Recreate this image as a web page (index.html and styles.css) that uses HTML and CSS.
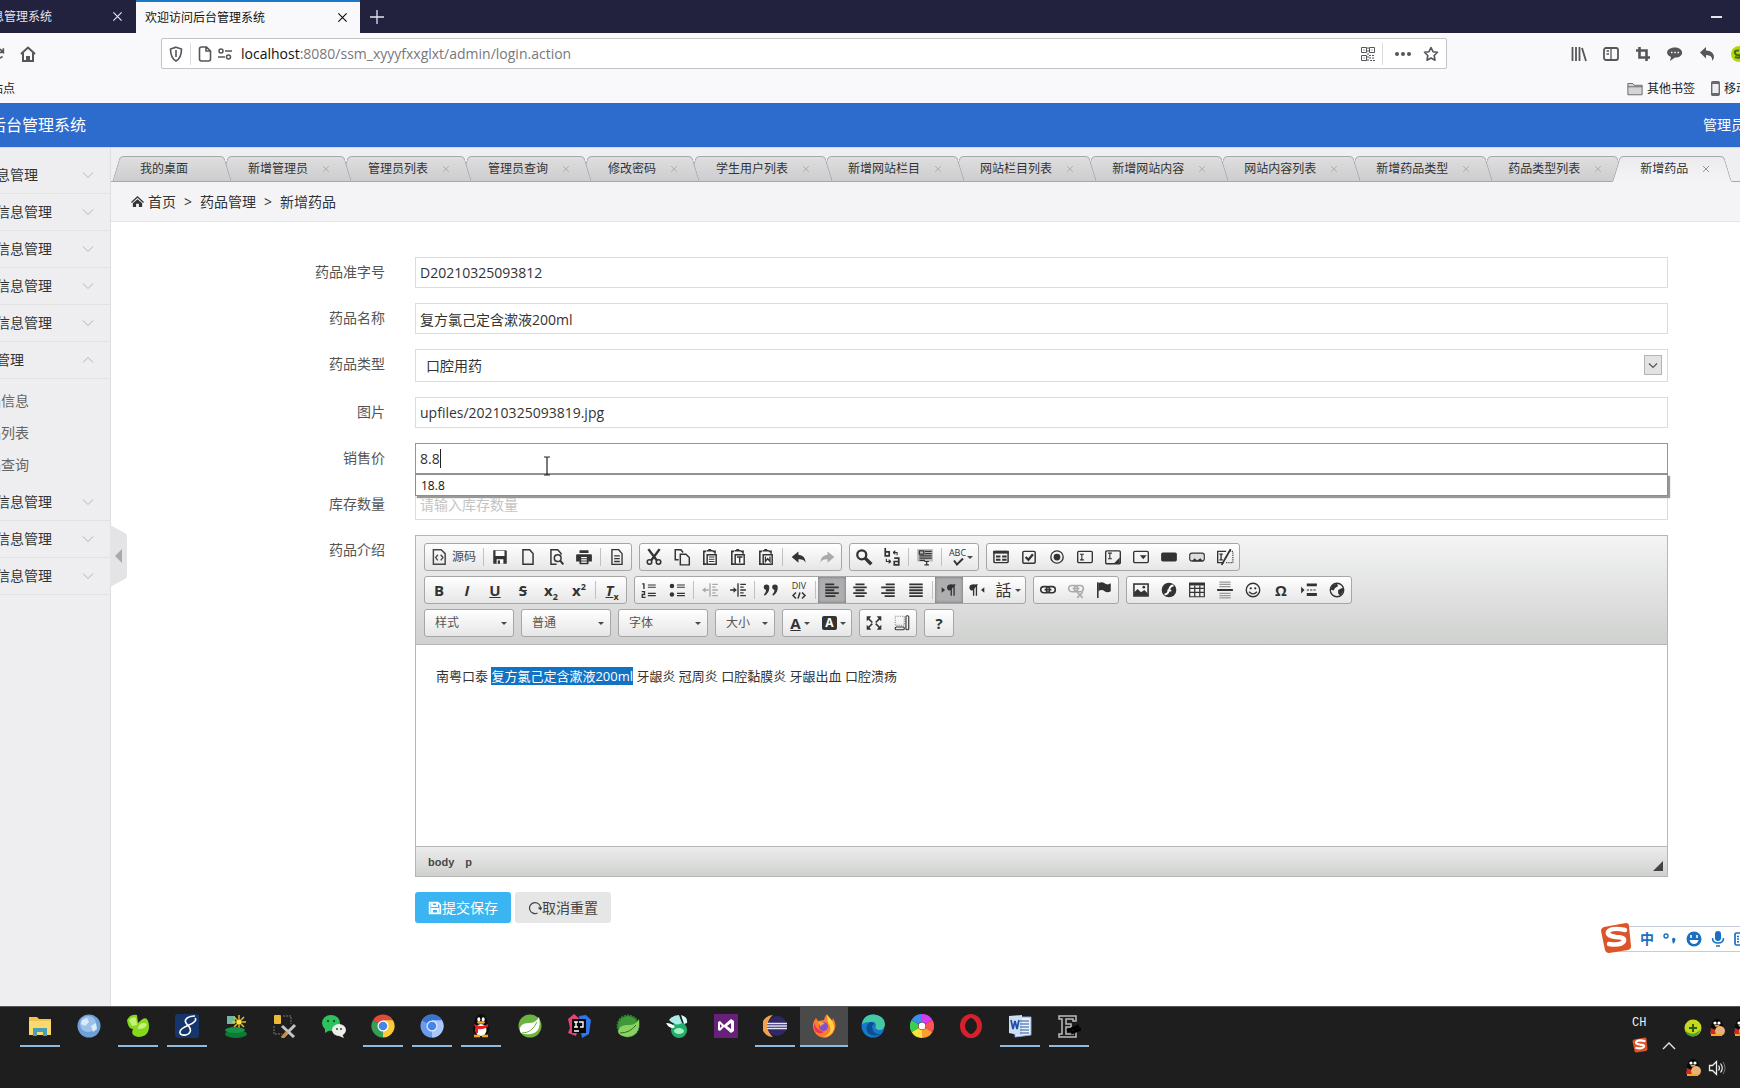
FILE: index.html
```html
<!DOCTYPE html>
<html lang="zh-CN">
<head>
  <meta charset="UTF-8">
  <meta name="viewport" content="width=device-width, initial-scale=1.0">
  <title>欢迎访问后台管理系统</title>
  <link rel="stylesheet" href="styles.css">
</head>
<body>
  <!-- icon sprite -->
  <svg class="sprite" aria-hidden="true">
    <symbol id="i-close" viewBox="0 0 12 12"><path d="M1.5 1.5l9 9M10.5 1.5l-9 9" fill="none" stroke="currentColor" stroke-width="1.3"/></symbol>
    <symbol id="i-down" viewBox="0 0 12 12"><path d="M1 3.500l5 5 5-5" fill="none" stroke="currentColor"/></symbol>
    <symbol id="i-up" viewBox="0 0 12 12"><path d="M1 8.500l5-5 5 5" fill="none" stroke="currentColor"/></symbol>
    <symbol id="i-house" viewBox="0 0 16 16"><path d="M1 8l7-6.500L15 8M3 7v8h10V7M7 15v-4h2v4" fill="none" stroke="currentColor" stroke-width="2"/></symbol>
    <symbol id="i-home" viewBox="0 0 14 14"><path d="M7 1L0 7.500l1 1 6-5.500 6 5.500 1-1zM7 4.500L2 9v4h3.500V9.500h3V13H12V9z"/></symbol>
    <symbol id="i-qq" viewBox="0 0 24 24"><ellipse cx="12" cy="9" rx="6.500" ry="9" fill="#0b0b0b"/><ellipse cx="12" cy="15" rx="8" ry="7" fill="#0b0b0b"/><ellipse cx="12" cy="16" rx="5.500" ry="6" fill="#fff"/><ellipse cx="9.800" cy="5.500" rx="1.500" ry="2.200" fill="#fff"/><ellipse cx="14.200" cy="5.500" rx="1.500" ry="2.200" fill="#fff"/><ellipse cx="12" cy="8.500" rx="4" ry="1.300" fill="#f5a623"/><path d="M5 10q7 4 14 0v3q-6 3-10 2v4H6.500v-5z" fill="#e02020"/><path d="M5 22h6M13 22h6" stroke="#f5a623" stroke-width="2.500"/></symbol>
    <symbol id="i-qqtray" viewBox="0 0 18 18"><ellipse cx="9" cy="8" rx="6" ry="8" fill="#080808"/><path d="M3 9l7 3-2 4-6-1z" fill="#cf2a20"/><circle cx="12" cy="12" r="5" fill="#e8b07c"/><circle cx="7" cy="4" r="1.600" fill="#fff"/><circle cx="11" cy="4" r="1.600" fill="#fff"/><ellipse cx="9" cy="6.700" rx="2.500" ry="1" fill="#f5a623"/><path d="M3 16h11" stroke="#f5a623" stroke-width="2"/></symbol>
    <symbol id="i-sogou" viewBox="0 0 32 32"><path d="M4 5L26 1q3 0 3 3l2 20q0 3-3 4L9 31q-3 0-4-3L1 9q0-3 3-4z" fill="#dc5427"/><path d="M25 8q-14-3-17 2-1 4 8 5 9 0 8 4-3 5-15 3" fill="none" stroke="#fff" stroke-width="4.500" stroke-linecap="round"/></symbol>
    <symbol id="i-page" viewBox="0 0 16 16"><path d="M3.500 1.500h6l3 3.500v9.500h-9z" fill="none" stroke="currentColor" stroke-width="1.300"/></symbol>
    <symbol id="i-clip" viewBox="0 0 16 16"><path d="M5 14.300H2.500V3h2M10.500 3h2v2M5 2.500h5.500M6.500 1.500h2.500" fill="none" stroke="currentColor" stroke-width="1.400"/><path d="M5.500 6h8v8.500h-8z" fill="#fff" stroke="currentColor" stroke-width="1.300"/></symbol>
  </svg>

  <header class="browser">
    <div class="tabbar">
      <div class="btab btab-old"><span>息管理系统</span><button aria-label="关闭"><svg><use href="#i-close"/></svg></button></div>
      <div class="btab btab-on"><span>欢迎访问后台管理系统</span><button aria-label="关闭"><svg><use href="#i-close"/></svg></button></div>
      <button class="newtab" aria-label="新标签页"><svg viewBox="0 0 14 14"><path d="M7 0v14M0 7h14" stroke="currentColor" stroke-width="1.300"/></svg></button>
      <button class="minimize" aria-label="最小化"></button>
    </div>
    <div class="navbar">
      <button class="reload" aria-label="刷新"><svg viewBox="0 0 6 16"><path d="M0 2l4 4V1M0 6h4M0 13l3-2" fill="none" stroke="currentColor" stroke-width="2"/></svg></button>
      <button class="home" aria-label="主页"><svg><use href="#i-house"/></svg></button>
      <div class="urlbox">
        <svg class="shield" viewBox="0 0 14 16"><path d="M7 1.200L12.500 3q0 9-5.500 12Q1.500 12 1.500 3z" fill="none" stroke="currentColor" stroke-width="1.600"/><path d="M7 4v7" stroke="currentColor" stroke-width="1.600"/></svg>
        <i class="vline"></i>
        <svg class="doc" viewBox="0 0 14 16"><path d="M1.500 3q0-2 2-2h5l4 4v8q0 2-2 2h-7q-2 0-2-2zM8 1v4h4" fill="none" stroke="currentColor" stroke-width="1.600"/></svg>
        <svg class="perm" viewBox="0 0 14 14"><g fill="none" stroke="currentColor" stroke-width="1.500"><circle cx="3" cy="4" r="2"/><path d="M7 4h7M0 10h7"/><circle cx="10.500" cy="10" r="2"/></g></svg>
        <span class="url"><b>localhost</b>:8080/ssm_xyyyfxxglxt/admin/login.action</span>
        <svg class="qr" viewBox="0 0 14 14"><g fill="none" stroke="currentColor"><path d="M.5.5h5v5h-5zM8.500.5h5v5h-5zM.5 8.500h5v5h-5zM2.500 3h1M10.500 3h1M2.500 11h1"/><path d="M7 0v14M8 8.500h6M8 11h6M9 13.500h5" stroke-dasharray="2 1"/></g></svg>
        <i class="vline"></i>
        <svg class="dots" viewBox="0 0 16 4"><circle cx="2" cy="2" r="2"/><circle cx="8" cy="2" r="2"/><circle cx="14" cy="2" r="2"/></svg>
        <svg class="star" viewBox="0 0 16 16"><path d="M8 1.500l2 4.200 4.500.6-3.300 3.200.8 4.700L8 12l-4 2.200.8-4.700L1.500 6.300 6 5.700z" fill="none" stroke="currentColor" stroke-width="1.600" stroke-linejoin="round"/></svg>
      </div>
      <div class="navtools">
        <svg viewBox="0 0 16 16"><path d="M1.500 1v14M5 1v14M8.500 1v14M11 2l4 13" stroke="currentColor" stroke-width="1.800"/></svg>
        <svg viewBox="0 0 16 16"><rect x="1" y="2" width="14" height="12" rx="2" fill="none" stroke="currentColor" stroke-width="1.800"/><path d="M8 2v12M3.500 5h2.500M3.500 8h2.500" stroke="currentColor" stroke-width="1.300"/></svg>
        <svg viewBox="0 0 16 16"><path d="M4.500 1v10.500H15M1 4.500h10.500V15" fill="none" stroke="currentColor" stroke-width="2.600"/></svg>
        <svg viewBox="0 0 16 16"><path d="M8 1.500c9 0 10 10 0 10L3 15l1-4C-3 8 0 1.500 8 1.500z" fill="currentColor"/><path d="M4 6.500h1.500M7.300 6.500h1.500M10.500 6.500H12" stroke="#fff" stroke-width="1.300"/></svg>
        <svg viewBox="0 0 16 16"><path d="M1 6.500L7 1v3.500q8 0 8 7.500l-2 3q1-6-6-6v3.500z" fill="currentColor"/></svg>
        <svg viewBox="0 0 16 16"><circle cx="8" cy="8" r="8" fill="#b5d80c"/><path d="M8 4.500Q3 4 4 7t5 2q1 4-5 2" fill="none" stroke="#446c0c" stroke-width="2"/></svg>
      </div>
    </div>
    <div class="bookmarks">
      <span>站点</span>
      <div class="bm-right">
        <svg class="folder" viewBox="0 0 18 14"><path d="M1 13.500V.8h5.500L8 2.800h9v10.700z" fill="#d4d4d6" stroke="#606064"/><path d="M1 4.500h16" stroke="#606064"/></svg>
        <a href="#">其他书签</a>
        <svg class="phone" viewBox="0 0 9 15"><rect x=".7" y=".7" width="7.600" height="13.600" rx="1" fill="#eee" stroke="#666a70" stroke-width="1.400"/><path d="M1 2h7M1 13h7" stroke="#666a70" stroke-width="2"/></svg>
        <a href="#">移动设备</a>
      </div>
    </div>
  </header>

  <div class="appbar"><span class="logo">后台管理系统</span><a href="#">管理员</a></div>

  <div class="workspace">
    <aside class="sidebar">
      <ul class="menu">
        <li><a href="#">息管理</a><svg><use href="#i-down"/></svg></li>
        <li><a href="#">信息管理</a><svg><use href="#i-down"/></svg></li>
        <li><a href="#">信息管理</a><svg><use href="#i-down"/></svg></li>
        <li><a href="#">信息管理</a><svg><use href="#i-down"/></svg></li>
        <li><a href="#">信息管理</a><svg><use href="#i-down"/></svg></li>
        <li><a href="#">管理</a><svg><use href="#i-up"/></svg></li>
      </ul>
      <ul class="submenu">
        <li><a href="#">品信息</a></li>
        <li><a href="#">品列表</a></li>
        <li><a href="#">品查询</a></li>
      </ul>
      <ul class="menu">
        <li><a href="#">信息管理</a><svg><use href="#i-down"/></svg></li>
        <li><a href="#">信息管理</a><svg><use href="#i-down"/></svg></li>
        <li><a href="#">信息管理</a><svg><use href="#i-down"/></svg></li>
      </ul>
      <button class="collapse" aria-label="收起菜单"><svg viewBox="0 0 18 62"><path d="M0 0l15 8q2 1 2 3v40q0 2-2 3L0 62z" fill="#e4e4e6"/><path d="M12 24v14l-7-7z" fill="#a9a9ab"/></svg></button>
    </aside>

    <main>
      <ul class="pagetabs" id="pagetabs"></ul>
      <nav class="crumbs">
        <svg><use href="#i-home"/></svg>
        <a href="#">首页</a><i>&gt;</i><a href="#">药品管理</a><i>&gt;</i><span>新增药品</span>
      </nav>

      <form class="drug-form" onsubmit="return false">
        <label for="no">药品准字号</label>
        <input type="text" id="no" value="D20210325093812">

        <label for="name">药品名称</label>
        <input type="text" id="name" value="复方氯己定含漱液200ml">

        <label for="type">药品类型</label>
        <div class="select-box">
          <select id="type"><option>口腔用药</option></select>
          <svg viewBox="0 0 18 20"><rect x=".5" y=".5" width="17" height="19" fill="#e3e3e3" stroke="#b4b4b4"/><path d="M5 8.500l4 4 4-4" fill="none" stroke="#555" stroke-width="1.200"/></svg>
        </div>

        <label for="pic">图片</label>
        <input type="text" id="pic" value="upfiles/20210325093819.jpg">

        <label for="price">销售价</label>
        <div class="price">
          <input type="text" id="price" class="focus" value="8.8" autocomplete="off">
          <i class="caret"></i>
          <div class="suggest">18.8</div>
          <svg class="ibeam" viewBox="0 0 8 20"><path d="M1 1h2.500q.5 0 .5 1v16q0 1-.5 1H1M7 1H4.500Q4 1 4 2M7 19H4.500Q4 19 4 18" fill="none" stroke="#222" stroke-width="1.200"/></svg>
        </div>

        <label for="stock">库存数量</label>
        <input type="text" id="stock" placeholder="请输入库存数量">

        <span class="lbl">药品介绍</span>
        <div class="editor">
          <div class="tools">
            <div class="row">
              <div class="group">
                <button class="source"><svg viewBox="0 0 16 16"><path d="M3 1.500h7L13.500 5v9.500H3z" fill="none" stroke="currentColor" stroke-width="1.300"/><path d="M7 6L5 8.500 7 11M9.500 6l2 2.500-2 2.500" fill="none" stroke="currentColor" stroke-width="1.200"/></svg>源码</button>
                <i class="sep"></i>
                <button aria-label="保存"><svg viewBox="0 0 16 16"><path d="M2 2h11.500l.5 1v11H2z" fill="currentColor"/><path d="M4 2.500h8V7H4zM5 10h6v4H5z" fill="#fff"/><path d="M6 11h2v3H6z"/></svg></button>
                <button aria-label="新建"><svg><use href="#i-page"/></svg></button>
                <button aria-label="预览"><svg viewBox="0 0 16 16"><path d="M12.500 6V5l-3-3.500h-6v13h5" fill="none" stroke="currentColor" stroke-width="1.300"/><circle cx="9.500" cy="9" r="3" fill="none" stroke="currentColor" stroke-width="1.300"/><path d="M11.500 11l3 3.500" stroke="currentColor" stroke-width="1.800"/></svg></button>
                <button aria-label="打印"><svg viewBox="0 0 16 16"><path d="M4 2h8v2.500H4zM2 5.500h12q1 0 1 1V12h-3v2.500H4V12H1V6.500q0-1 1-1z" fill="currentColor"/><path d="M5.500 8.500h5M5.500 10.500h5M5.500 12.500h5" stroke="#fff"/></svg></button>
                <i class="sep"></i>
                <button aria-label="模板"><svg viewBox="0 0 16 16"><path d="M3.500 1.500h6l3 3.500v9.500h-9zM5.500 7h5M5.500 9.500h5M5.500 12h5" fill="none" stroke="currentColor" stroke-width="1.200"/></svg></button>
              </div>
              <div class="group">
                <button aria-label="剪切"><svg viewBox="0 0 16 16"><path d="M3 1l7.500 10M13 1L5.500 11" stroke="currentColor" stroke-width="2.200"/><circle cx="4" cy="12.500" r="2" fill="none" stroke="currentColor" stroke-width="1.400"/><circle cx="12" cy="12.500" r="2" fill="none" stroke="currentColor" stroke-width="1.400"/></svg></button>
                <button aria-label="复制"><svg viewBox="0 0 16 16"><path d="M5 10.500H2v-9h5l2 2.500M6.500 5.500h5l3 3V15h-8z" fill="none" stroke="currentColor" stroke-width="1.300"/></svg></button>
                <button aria-label="粘贴"><svg viewBox="0 0 16 16"><use href="#i-clip"/><path d="M7 8h5M7 10h5M7 12h5" stroke="currentColor"/></svg></button>
                <button aria-label="粘贴为文本"><svg viewBox="0 0 16 16"><use href="#i-clip"/><path d="M7 8h5M9.500 8v5" stroke="currentColor" stroke-width="1.300"/></svg></button>
                <button aria-label="从 Word 粘贴"><svg viewBox="0 0 16 16"><use href="#i-clip"/><path d="M7.500 7.500V12l2-2.500 2 2.500V7.500" fill="none" stroke="currentColor" stroke-width="1.200"/></svg></button>
                <i class="sep"></i>
                <button aria-label="撤消"><svg viewBox="0 0 16 16"><path d="M1.500 8l6-5v3q6 .5 6.500 7-2-3.500-6.500-3v3z" fill="currentColor"/></svg></button>
                <button class="off" aria-label="重做"><svg viewBox="0 0 16 16"><path d="M14.500 8l-6-5v3Q2.500 6.500 2 13q2-3.500 6.500-3v3z" fill="currentColor"/></svg></button>
              </div>
              <div class="group">
                <button aria-label="查找"><svg viewBox="0 0 16 16"><circle cx="6" cy="6" r="4" fill="none" stroke="currentColor" stroke-width="2"/><path d="M9 9l5.500 5.500" stroke="currentColor" stroke-width="3"/></svg></button>
                <button aria-label="替换"><svg viewBox="0 0 16 16"><path d="M2 0v7h3.500V3.500H2M10 9h4v6h-4v-3h4" fill="none" stroke="currentColor" stroke-width="1.500"/><path d="M9 4h3.500v2.500M9 4l2-1.500M9 4l2 1.500M3 9.500V12h4M7 12l-2-1.500M7 12l-2 1.500" fill="none" stroke="currentColor"/></svg></button>
                <i class="sep"></i>
                <button aria-label="全选"><svg viewBox="0 0 16 16"><path d="M1 1h14v11H1z" fill="#bbb"/><path d="M3 2.500h4v3H3zM8 3h6M8 5h6M3 7h11M3 9h11M3 11h5M7.500 12h4M7.500 15h4M9.500 12v3" fill="none" stroke="currentColor" stroke-width="1.100"/></svg></button>
                <i class="sep"></i>
                <button class="drop spell" aria-label="拼写检查"><span>ABC</span><svg viewBox="0 0 16 8"><path d="M4 2l3 4 6-6" fill="none" stroke="currentColor" stroke-width="2"/></svg></button>
              </div>
              <div class="group">
                <button aria-label="表单"><svg viewBox="0 0 16 16"><rect x="1.700" y="3" width="12.600" height="10" rx="1" fill="none" stroke="currentColor" stroke-width="1.300"/><path d="M1 2.500h14V5H1z"/><path d="M3.500 7.500h4M3.500 10.500h4M9 7.500h4M9 10.500h4" stroke="currentColor" stroke-width="1.700"/></svg></button>
                <button aria-label="复选框"><svg viewBox="0 0 16 16"><rect x="2.500" y="3" width="11" height="10.500" rx="1" fill="none" stroke="currentColor" stroke-width="1.300"/><path d="M5 8l2.500 2.500 4-5" fill="none" stroke="currentColor" stroke-width="2"/></svg></button>
                <button aria-label="单选按钮"><svg viewBox="0 0 16 16"><circle cx="8" cy="8" r="5.500" fill="none" stroke="currentColor" stroke-width="1.200"/><circle cx="8" cy="8" r="3"/></svg></button>
                <button aria-label="单行文本"><svg viewBox="0 0 16 16"><rect x="1.500" y="3" width="13" height="10" rx="1" fill="none" stroke="currentColor" stroke-width="1.200"/><path d="M3.500 5.500H7M5.200 5.500v5M3.500 10.500H7" stroke="currentColor"/></svg></button>
                <button aria-label="多行文本"><svg viewBox="0 0 16 16"><rect x="1.500" y="2.500" width="13" height="11.500" rx="1" fill="none" stroke="currentColor" stroke-width="1.200"/><path d="M3.500 4.500H7M5.200 4.500v5M3.500 9.500H7" stroke="currentColor"/><path d="M14 8.500V14H8.500z"/></svg></button>
                <button aria-label="列表"><svg viewBox="0 0 16 16"><rect x="1.500" y="3" width="13" height="10" rx="1" fill="none" stroke="currentColor" stroke-width="1.200"/><path d="M7 6.500h6l-3 3.500z"/></svg></button>
                <button aria-label="按钮"><svg viewBox="0 0 16 16"><rect x="1" y="4" width="14" height="8" rx="1.500"/></svg></button>
                <button aria-label="图像按钮"><svg viewBox="0 0 16 16"><rect x="1.500" y="4.500" width="13" height="7" rx="2" fill="#ddd" stroke="currentColor"/><path d="M3 12l3-3 2 2 3-2 2.500 3z"/></svg></button>
                <button aria-label="隐藏域"><svg viewBox="0 0 16 16"><path d="M9 3H1.500v10H7M3 5.500h3M4.500 5.500v5M3 10.500h3" fill="none" stroke="currentColor" stroke-width="1.200"/><path d="M5 15L13 1" stroke="currentColor" stroke-width="1.700"/><path d="M12 3h3v10H8" fill="none" stroke="currentColor" stroke-dasharray="1 1"/></svg></button>
              </div>
            </div>

            <div class="row">
              <div class="group">
                <button><b>B</b></button>
                <button><b class="it">I</b></button>
                <button><b class="un">U</b></button>
                <button><b class="st">S</b></button>
                <button><b>x<sub>2</sub></b></button>
                <button><b>x<sup>2</sup></b></button>
                <i class="sep"></i>
                <button><b><span class="it un">T</span><sub>x</sub></b></button>
              </div>
              <div class="group">
                <button aria-label="编号列表"><svg viewBox="0 0 16 16"><path d="M2 2.500h1.500V7M1.500 9.500H4V12H2v2.500h3" fill="none" stroke="currentColor" stroke-width="1.200"/><path d="M7 3.500h7M7 5.500h7M7 11h7M7 13h7" stroke="currentColor"/></svg></button>
                <button aria-label="项目列表"><svg viewBox="0 0 16 16"><circle cx="3.500" cy="4.500" r="2"/><circle cx="3.500" cy="12" r="2"/><path d="M8 3.500h7M8 5.500h7M8 11h7M8 13h7" stroke="currentColor"/></svg></button>
                <i class="sep"></i>
                <button class="off" aria-label="减少缩进"><svg viewBox="0 0 16 16"><path d="M8 2v12M10 3h5M10 5.500h3M10 8h5M10 10.500h3M10 13h5M2 8h5" stroke="currentColor" stroke-width="1.200"/><path d="M1 8l3-2.500v5z"/></svg></button>
                <button aria-label="增加缩进"><svg viewBox="0 0 16 16"><path d="M8 2v12M10 3h5M10 5.500h3M10 8h5M10 10.500h3M10 13h5M1 8h5" stroke="currentColor" stroke-width="1.200"/><path d="M7 8L4 5.500v5z"/></svg></button>
                <i class="sep"></i>
                <button aria-label="块引用"><svg viewBox="0 0 16 16"><path d="M1.500 5.500a2.500 2.500 0 015 0q0 5-4 7.500l-.8-.8q2-2 1.900-4.200-2.100-.5-2.100-2.500zM9 5.500a2.500 2.500 0 015 0q0 5-4 7.500l-.8-.8q2-2 1.900-4.200Q9 7.500 9 5.500z"/></svg></button>
                <button class="div" aria-label="创建 DIV"><span>DIV</span><svg viewBox="0 0 16 8"><path d="M5 1L2 4l3 3M11 1l3 3-3 3M9 1L7 7" fill="none" stroke="currentColor" stroke-width="1.500"/></svg></button>
                <i class="sep"></i>
                <button class="on" aria-label="左对齐"><svg viewBox="0 0 16 16"><path d="M2 3h8M2 5.600h12M2 8.200h8M2 10.800h12M2 13.400h9" stroke="currentColor" stroke-width="1.600"/></svg></button>
                <button aria-label="居中"><svg viewBox="0 0 16 16"><path d="M4 3h8M2 5.600h12M4 8.200h8M2 10.800h12M4 13.400h8" stroke="currentColor" stroke-width="1.600"/></svg></button>
                <button aria-label="右对齐"><svg viewBox="0 0 16 16"><path d="M6 3h8M2 5.600h12M6 8.200h8M2 10.800h12M5 13.400h9" stroke="currentColor" stroke-width="1.600"/></svg></button>
                <button aria-label="两端对齐"><svg viewBox="0 0 16 16"><path d="M2 3h12M2 5.600h12M2 8.200h12M2 10.800h12M2 13.400h12" stroke="currentColor" stroke-width="1.600"/></svg></button>
                <i class="sep"></i>
                <button class="on" aria-label="文字方向从左到右"><svg viewBox="0 0 16 16"><path d="M1.500 5.500v5l3-2.500z"/><path d="M14 3H9a2.700 2.700 0 000 5.500" fill="currentColor"/><path d="M10 3v10M12.500 3v10" stroke="currentColor" stroke-width="1.200"/></svg></button>
                <button aria-label="文字方向从右到左"><svg viewBox="0 0 16 16"><path d="M14.500 5.500v5l-3-2.500z"/><path d="M9 3H4a2.700 2.700 0 000 5.500"/><path d="M5 3v10M7.500 3v10" stroke="currentColor" stroke-width="1.200"/></svg></button>
                <button class="drop lang">話</button>
              </div>
              <div class="group">
                <button aria-label="插入链接"><svg viewBox="0 0 16 16"><g fill="none" stroke="currentColor" stroke-width="1.400"><rect x="1.500" y="5" width="8" height="5.500" rx="2.700"/><rect x="6.500" y="5" width="8" height="5.500" rx="2.700"/><path d="M5 7.700h6"/></g></svg></button>
                <button class="off" aria-label="取消链接"><svg viewBox="0 0 16 16"><g fill="none" stroke="currentColor" stroke-width="1.400"><rect x="1.500" y="4" width="8" height="5.500" rx="2.700"/><rect x="6.500" y="4" width="8" height="5.500" rx="2.700"/><path d="M5 6.700h6M9 10l5 5M14 10l-5 5"/></g></svg></button>
                <button aria-label="锚点"><svg viewBox="0 0 16 16"><path d="M2.500 1v14" stroke="currentColor" stroke-width="1.400"/><path d="M3 2q3-2 5.500 0T14 2v7q-3 2-5.500 0T3 9z"/></svg></button>
              </div>
              <div class="group">
                <button aria-label="图像"><svg viewBox="0 0 16 16"><rect x="1.700" y="2.700" width="12.600" height="10.600" fill="none" stroke="currentColor" stroke-width="1.400"/><path d="M2 13v-3l3-3 3 3 3-2 3 3v2z"/><circle cx="10.500" cy="5.500" r="1.200"/></svg></button>
                <button aria-label="Flash"><svg viewBox="0 0 16 16"><circle cx="8" cy="8" r="6.500"/><path d="M12 4q-3 0-4 4t-4 4M6.500 8.500H10" fill="none" stroke="#fff" stroke-width="1.600"/></svg></button>
                <button aria-label="表格"><svg viewBox="0 0 16 16"><path d="M1.500 2h13v12h-13zM1.500 6.500h13M1.500 10.200h13M6 4v10M10.500 4v10" fill="none" stroke="currentColor" stroke-width="1.100"/><path d="M1 1.500h14V4H1z"/></svg></button>
                <button aria-label="水平线"><svg viewBox="0 0 16 16"><path d="M3 1h10M3 3h10M3 5h10M3 11h10M3 13h10M3 15h10" stroke="#999"/><path d="M1 8h14" stroke="currentColor" stroke-width="1.800"/></svg></button>
                <button aria-label="表情符"><svg viewBox="0 0 16 16"><circle cx="8" cy="8" r="6" fill="none" stroke="currentColor" stroke-width="1.200"/><circle cx="6" cy="6.500" r="1"/><circle cx="10" cy="6.500" r="1"/><path d="M4.500 9.500q3.500 4 7 0" fill="none" stroke="currentColor" stroke-width="1.200"/></svg></button>
                <button><b>Ω</b></button>
                <button aria-label="分页符"><svg viewBox="0 0 16 16"><path d="M1 5v6l3-3z"/><path d="M6 3.500h9M6 12h9" stroke="currentColor" stroke-width="2.500"/><path d="M6 8h9" stroke="currentColor" stroke-dasharray="2 1"/></svg></button>
                <button aria-label="IFrame"><svg viewBox="0 0 16 16"><circle cx="8" cy="8" r="6" fill="none" stroke="currentColor" stroke-width="1.200"/><path d="M4 3.500l4-1 1 2-3 2-1 2-3-1zM9 8l4-2 1 2-3 5-2-2z"/></svg></button>
              </div>
            </div>

            <div class="row">
              <button class="combo">样式</button>
              <button class="combo">普通</button>
              <button class="combo">字体</button>
              <button class="combo short">大小</button>
              <div class="group">
                <button class="drop"><b class="un">A</b></button>
                <button class="drop"><b class="inv">A</b></button>
              </div>
              <div class="group">
                <button aria-label="全屏"><svg viewBox="0 0 16 16"><path d="M1.500 2v4.500l1.500-1.500 3 3 1-1-3-3L5.500 2zM14.500 2v4.500L13 5l-3 3-1-1 3-3-1.500-2zM1.500 14V9.500L3 11l3-3 1 1-3 3 1.500 2zM14.500 14V9.500L13 11l-3-3-1 1 3 3-1.500 2z"/></svg></button>
                <button aria-label="显示区块"><svg viewBox="0 0 16 16"><path d="M2 2h8v8H2z" fill="none" stroke="#888" stroke-dasharray="1 1"/><rect x="2" y="11.500" width="8" height="2.500" rx="1" fill="none" stroke="currentColor"/><rect x="11.500" y="1.500" width="2.500" height="12.500" rx="1" fill="none" stroke="currentColor"/></svg></button>
              </div>
              <div class="group"><button><b>?</b></button></div>
            </div>
          </div>
          <div class="content">
            <p>南粤口泰 <mark>复方氯己定含漱液200ml</mark> 牙龈炎 冠周炎 口腔黏膜炎 牙龈出血 口腔溃疡</p>
          </div>
          <div class="path"><a href="#">body</a><a href="#">p</a><i class="resize"></i></div>
        </div>

        <div class="actions">
          <button class="btn primary"><svg viewBox="0 0 14 14"><path d="M1.700 1.700H10l2.300 2.500v8.100H1.700zM4 2v3h5V2M4 12V8h6v4" fill="none" stroke="currentColor" stroke-width="1.800"/></svg>提交保存</button>
          <button class="btn"><svg viewBox="0 0 14 14"><path d="M9.500 12A5.500 5.500 0 1112.500 7.500M10.500 6.500l2 2 1.500-2" fill="none" stroke="currentColor" stroke-width="1.200"/></svg>取消重置</button>
        </div>
      </form>
    </main>
  </div>

  <!-- input method bar floating over the desktop -->
  <div class="ime">
    <svg class="ime-logo"><use href="#i-sogou"/></svg>
    <div class="ime-bar">
      <b>中</b>
      <svg viewBox="0 0 16 16"><circle cx="4" cy="5" r="2" fill="none" stroke="currentColor" stroke-width="1.400"/><path d="M10 8.500a1.700 1.700 0 013.400 0q0 3-2.400 4.500" fill="currentColor"/></svg>
      <svg viewBox="0 0 16 16"><circle cx="8" cy="8" r="7.500"/><path d="M5 4v3M11 4v3" stroke="#fff" stroke-width="1.600"/><path d="M3.500 9h9q-1 4-4.500 4t-4.500-4z" fill="#fff"/></svg>
      <svg viewBox="0 0 16 16"><rect x="5" y="0" width="6" height="10" rx="3"/><path d="M2.500 7q0 5 5.500 5t5.500-5M6 15h4" fill="none" stroke="currentColor" stroke-width="1.500"/></svg>
      <svg viewBox="0 0 16 16"><rect x="1" y="2" width="14" height="12" rx="1.500" fill="none" stroke="currentColor" stroke-width="1.700"/><path d="M3 5.500h10M3 8h10M3 10.700h10" stroke="currentColor" stroke-width="1.500" stroke-dasharray="2 1"/></svg>
    </div>
  </div>

  <footer class="taskbar">
    <div class="apps">
      <button class="run" aria-label="文件资源管理器"><svg viewBox="0 0 24 24"><path d="M1 3h8l2 2h12v16H1z" fill="#f2c14e"/><path d="M1 7h22v14H1z" fill="#fbd96f"/><path d="M5 22v-8h14v8h-4v-4H9v4z" fill="#4a9fb8"/></svg></button>
      <button aria-label="浏览器"><svg viewBox="0 0 24 24"><circle cx="12" cy="12" r="11.500" fill="#6d9fd8"/><circle cx="11" cy="10" r="8" fill="#9cc1ea"/><path d="M5 6l5-2 2 4-4 4-4-2zM14 12l5-3 1 6-4 3z" fill="#dcebfa"/></svg></button>
      <button class="run" aria-label="加速器"><svg viewBox="0 0 24 24"><path d="M1 6Q4 0 11 1l1 8Q22-2 23 12q0 11-11 11Q4 22 7 15q-5 0-6-9z" fill="#86d81c"/><path d="M3 6q4-4 7-2l1 7-5 1zM12 13q3-6 9-3-1 5-9 5z" fill="#c5f37a"/></svg></button>
      <button class="run" aria-label="数据库工具"><svg viewBox="0 0 24 24"><rect width="24" height="24" rx="3" fill="#16366b"/><path d="M20 2C12 2 9 6 11 9s6 5 4 9-9 4-10 1 4-6 9-8 8-5 6-7" fill="none" stroke="#fff" stroke-width="1.600"/></svg></button>
      <button aria-label="数据源"><svg viewBox="0 0 24 24"><path d="M3 2h8v8H3z" fill="#6cb9a5"/><path d="M15 1v14M8 8h14M10 3l10 10M20 3L10 13" stroke="#e6c02d" stroke-width="1.500"/><circle cx="15" cy="8" r="3" fill="#ffe34d" stroke="#8a7412"/><ellipse cx="12" cy="20" rx="11" ry="4" fill="#0c7a35"/><ellipse cx="11" cy="16" rx="10" ry="3" fill="#17934a"/></svg></button>
      <button aria-label="设置工具"><svg viewBox="0 0 24 24"><rect x="1" y="1" width="7" height="9" rx="1" fill="#eeb73e"/><path d="M10 2h8v8M1 12v8h8" fill="none" stroke="#777" stroke-dasharray="2 1"/><path d="M9 12l12 11M22 11L10 23" stroke="#c2c5c8" stroke-width="3"/><path d="M14 18l-5 6" stroke="#c98d3f" stroke-width="3"/></svg></button>
      <button aria-label="微信"><svg viewBox="0 0 24 24"><ellipse cx="9" cy="9" rx="9" ry="8" fill="#2ec25f"/><path d="M3 14v5l5-3z" fill="#2ec25f"/><ellipse cx="17" cy="16" rx="7" ry="6" fill="#ededed"/><path d="M20 20l2 4-5-2z" fill="#ededed"/><g fill="#165c2e"><circle cx="6" cy="7" r="1.200"/><circle cx="12" cy="7" r="1.200"/><circle cx="15" cy="15" r="1"/><circle cx="19" cy="15" r="1"/></g></svg></button>
      <button class="run" aria-label="Chrome"><svg viewBox="0 0 24 24"><path d="M12 12L2 6.200A11.500 11.500 0 0122 6.200z" fill="#df4a3c"/><path d="M12 12V6.200h10A11.500 11.500 0 0112 23.500z" fill="#fbcb3c"/><path d="M12 12l0 11.500A11.500 11.500 0 012 6.200z" fill="#35a054"/><circle cx="12" cy="12" r="5.500" fill="#fff"/><circle cx="12" cy="12" r="4.300" fill="#4584ea"/></svg></button>
      <button class="run" aria-label="Chromium"><svg viewBox="0 0 24 24"><circle cx="12" cy="12" r="11.500" fill="#6a9bec"/><path d="M12 12L2 6.200A11.500 11.500 0 0122 6.200z" fill="#3c72cf"/><path d="M12 12V6.200h10A11.500 11.500 0 0112 23.500z" fill="#a9c8fa"/><circle cx="12" cy="12" r="5.500" fill="#e4eefe"/><circle cx="12" cy="12" r="4.300" fill="#4584ea"/></svg></button>
      <button class="run" aria-label="QQ"><svg><use href="#i-qq"/></svg></button>
      <button aria-label="Spring"><svg viewBox="0 0 24 24"><circle cx="12" cy="12" r="11.500" fill="#6db33f"/><path d="M21 3q3 15-8 17-10 1-11-3-1-8 9-8 7 0 10-6z" fill="#fff"/><path d="M4 19q10 0 15-11" fill="none" stroke="#6db33f"/></svg></button>
      <button aria-label="IntelliJ IDEA"><svg viewBox="0 0 24 24"><path d="M1 5l6-5 7 6-5 16-8-3 2-5z" fill="#e5437f"/><path d="M12 2l7-1 5 5-2 14-7 4z" fill="#3176e8"/><rect x="5" y="5" width="14" height="14" fill="#080808"/><path d="M7 8h4M9 8v5M7 13h4M12 8h4v5h-3M7 17h5" fill="none" stroke="#fff" stroke-width="1.400"/></svg></button>
      <button aria-label="STS"><svg viewBox="0 0 24 24"><circle cx="12" cy="12" r="10.500" fill="#3e9a38" stroke="#2a7d2c" stroke-width="2" stroke-dasharray="2 1"/><path d="M23 5q2 17-12 18-8-1-9-5 1-8 11-7 7 0 10-6z" fill="#8bd162"/><path d="M4 19q10 0 16-8" fill="none" stroke="#277226"/></svg></button>
      <button aria-label="Navicat"><svg viewBox="0 0 24 24"><circle cx="14" cy="16" r="8" fill="#20b06a"/><ellipse cx="14" cy="17" rx="5" ry="3" fill="#a4efc4"/><path d="M4 6q4-5 10-5l3 8q-6 4-13-3z" fill="#a9ece8"/><path d="M16 1q7 2 6 8l-3 1z" fill="#d9fbf8"/><path d="M1 9q6 0 9 4-5 3-9-4z" fill="#fff"/></svg></button>
      <button aria-label="Visual Studio"><svg viewBox="0 0 24 24"><rect width="24" height="24" fill="#68217a"/><path d="M4 8l2-1 4 4 7-6 3 2v10l-3 2-7-6-4 4-2-1zm2 2v4l2-2zm11-1l-4 3 4 3z" fill="#fff" fill-rule="evenodd"/></svg></button>
      <button class="run" aria-label="Eclipse"><svg viewBox="0 0 24 24"><path d="M10 1A11 11 0 0010 23 14 14 0 0110 1z" fill="#f4a14b"/><circle cx="14" cy="12" r="10" fill="#2f2867"/><path d="M4 9.500h20M4 12h20M4 14.500h20" stroke="#e4e2f5" stroke-width="1.500"/></svg></button>
      <button class="run current" aria-label="Firefox"><svg viewBox="0 0 24 24"><path d="M2 7l2-3 2 3 6-1q1-4 3-6 2 5 5 7l1-3q5 8 0 15-8 9-17 1-5-6-2-13z" fill="#ff7c2b"/><path d="M15 1q8 7 7 14-3 8-10 8 8-4 6-10-3-5-3-12z" fill="#ffd044"/><path d="M2 9q3 8 10 9-8 4-10-5z" fill="#f12f5b"/><circle cx="11.500" cy="12.500" r="4.500" fill="#8051d4"/><path d="M6 8q4-1 7 2-4 0-4 3z" fill="#ffab3d"/></svg></button>
      <button aria-label="Edge"><svg viewBox="0 0 24 24"><circle cx="12" cy="12" r="11.500" fill="#1678cc"/><path d="M1 10Q3 0 13 .5 24 2 24 11q-1 5-6 5-5-1-3-4 0-5-6-4-5 0-8 2z" fill="#45c9a5"/><path d="M9 8q-6 5-2 11 6 5 13 1-8 1-9-7 0-3 3-3-2-2-5-2z" fill="#0c4f91"/></svg></button>
      <button aria-label="360"><svg viewBox="0 0 24 24"><g fill="none" stroke-width="8"><path d="M12 4a8 8 0 017 4" stroke="#d43ef0"/><path d="M19 8a8 8 0 010 8" stroke="#ff5454"/><path d="M19 16a8 8 0 01-7 4" stroke="#ff9e2d"/><path d="M12 20a8 8 0 01-7-4" stroke="#f6e33c"/><path d="M5 16a8 8 0 010-8" stroke="#3ccf4f"/><path d="M5 8a8 8 0 017-4" stroke="#3c8cf0"/></g><circle cx="12" cy="12" r="3.500" fill="#fff"/></svg></button>
      <button aria-label="Opera"><svg viewBox="0 0 24 24"><ellipse cx="12" cy="12" rx="8.500" ry="9.500" fill="none" stroke="#d6212c" stroke-width="5"/><ellipse cx="12" cy="12" rx="4.500" ry="8" fill="#1d1d1d"/></svg></button>
      <button class="run" aria-label="Word"><svg viewBox="0 0 24 24"><path d="M7 3h16v18L7 23z" fill="#e9f0fb" stroke="#84a6dc"/><path d="M1 2l13-1v21L1 19z" fill="#cdddf6"/><path d="M12 7h9M12 10h9M12 13h9M12 16h9M12 19h9" stroke="#2b579a"/><path d="M3 6l2 9 2-8 2 8 2-9" fill="none" stroke="#1e4fa1" stroke-width="1.700"/></svg></button>
      <button class="run" aria-label="EditPlus"><svg viewBox="0 0 24 24"><path d="M2 2h17v5h-3V5H9v5h5v3H9v7h7v-3h3v6H2v-3h3V5H2z" fill="none" stroke="#bdbdbd" stroke-width="1.500"/><path d="M10 17l12-5M14 19l10-4" stroke="#000" stroke-width="3"/></svg></button>
    </div>
    <div class="tray">
      <div class="lang-col"><span>CH</span><svg><use href="#i-sogou"/></svg></div>
      <svg class="chev" viewBox="0 0 14 14"><path d="M1 10l6-6 6 6" fill="none" stroke="#e6e6e6" stroke-width="1.400"/></svg>
      <div class="tray-grid">
        <svg viewBox="0 0 18 18"><circle cx="9" cy="9" r="8.500" fill="#c8d91d"/><path d="M1 11q8 8 16-1-3 8-9 7.500-5-1-7-6.500z" fill="#4aa32c"/><path d="M9 5v8M5 9h8" stroke="#285c16" stroke-width="2"/></svg>
        <svg><use href="#i-qqtray"/></svg>
        <svg><use href="#i-qqtray"/></svg>
        <svg><use href="#i-qqtray"/></svg>
        <svg viewBox="0 0 18 18"><path d="M1.500 6.500h3l4-4v13l-4-4h-3z" fill="none" stroke="#eee" stroke-width="1.300"/><path d="M10.500 6.500q2 2.500 0 5M12.500 4.500q3.500 4.500 0 9" fill="none" stroke="#eee" stroke-width="1.200"/><path d="M15 3q4 6 0 12" fill="none" stroke="#777"/></svg>
      </div>
    </div>
  </footer>

  <script>
    const tabs = ['我的桌面', '新增管理员', '管理员列表', '管理员查询', '修改密码', '学生用户列表',
      '新增网站栏目', '网站栏目列表', '新增网站内容', '网站内容列表', '新增药品类型', '药品类型列表', '新增药品'];

    const list = document.getElementById('pagetabs');
    tabs.forEach((name, i) => {
      const li = document.createElement('li');
      if (i === tabs.length - 1) li.className = 'active';
      // the desktop tab can't be closed
      const close = i === 0 ? '' : '<button aria-label="关闭"><svg><use href="#i-close"/></svg></button>';
      li.innerHTML = `<a href="#">${name}</a>${close}`;
      list.appendChild(li);
    });
  </script>
</body>
</html>
```
FILE: styles.css
```css
* {
  box-sizing: border-box;
}
body {
  margin: 0;
  min-height: 100vh;
  display: flex;
  flex-direction: column;
  overflow: hidden;
  background: #fff;
  color: #333;
  font: 14px/20px "Open Sans", "Noto Sans CJK SC", sans-serif;
}
ul, p {
  margin: 0;
  padding: 0;
  list-style: none;
}
a {
  color: inherit;
  text-decoration: none;
}
i {
  font-style: normal;
}
svg {
  display: block;
  flex: none;
  fill: currentColor;
}
button {
  margin: 0;
  padding: 0;
  border: 0;
  background: none;
  color: inherit;
  font: inherit;
}
.sprite {
  display: none;
}

/* browser chrome */
.browser {
  background: #f9f9fb;
  color: #55555a;
}
.tabbar {
  display: flex;
  align-items: center;
  height: 33px;
  background: #22223f;
  color: #e4e4ee;
  font-size: 12px;
}
.btab {
  display: flex;
  align-items: center;
  justify-content: space-between;
  height: 33px;
  white-space: nowrap;
}
.btab svg {
  width: 11px;
  height: 11px;
}
.btab-old {
  width: 136px;
  padding-right: 13px;
}
.btab-old span {
  margin-left: -8px;
}
.btab-on {
  width: 224px;
  padding: 0 12px 0 9px;
  border-top: 2px solid #1a78c8;
  background: #f9f9fb;
  color: #111;
}
.newtab {
  margin-left: 10px;
}
.newtab svg {
  width: 14px;
  height: 14px;
}
.minimize {
  width: 11px;
  height: 2px;
  margin: 0 18px 0 auto;
  background: #e4e4ee;
}
.navbar {
  display: flex;
  align-items: center;
  height: 41px;
}
.reload svg {
  width: 5px;
  height: 16px;
}
.home {
  margin-left: 15px;
}
.home svg {
  width: 16px;
  height: 16px;
}
.urlbox {
  display: flex;
  align-items: center;
  flex: 1;
  height: 31px;
  margin-left: 125px;
  padding: 0 7px;
  border: 1px solid #c4c4c8;
  border-radius: 2px;
  background: #fff;
}
.vline {
  width: 1px;
  height: 22px;
  background: #dcdce0;
}
.shield {
  width: 14px;
  height: 16px;
  margin-right: 7px;
}
.doc {
  width: 14px;
  height: 16px;
  margin: 0 6px 0 7px;
}
.perm {
  width: 14px;
  height: 14px;
}
.url {
  flex: 1;
  margin-left: 9px;
  color: #77777c;
}
.url b {
  color: #111;
  font-weight: normal;
}
.qr {
  width: 14px;
  height: 14px;
  margin-right: 7px;
}
.dots {
  width: 16px;
  height: 4px;
  margin: 0 12px;
}
.star {
  width: 16px;
  height: 16px;
}
.navtools {
  display: flex;
  gap: 16px;
  margin: 0 -7px 0 124px;
}
.navtools svg {
  width: 16px;
  height: 16px;
}
.bookmarks {
  display: flex;
  align-items: center;
  justify-content: space-between;
  height: 29px;
  color: #222;
  font-size: 12px;
}
.bookmarks span {
  margin-left: -9px;
}
.bm-right {
  display: flex;
  align-items: center;
  margin-right: -32px;
}
.folder {
  width: 16px;
  height: 14px;
  margin-right: 4px;
}
.phone {
  width: 9px;
  height: 15px;
  margin: 0 4px 0 16px;
}

/* app header */
.appbar {
  display: flex;
  align-items: center;
  justify-content: space-between;
  height: 45px;
  border-bottom: 1px solid #c9dcf4;
  background: #2d6bcd;
  color: #fff;
}
.appbar .logo {
  margin-left: -10px;
  font-size: 16px;
}
.appbar a {
  margin-right: -5px;
}

.workspace {
  display: flex;
  flex: 1;
}
.sidebar {
  position: relative;
  width: 111px;
  padding-top: 9px;
  border-right: 1px solid #dedee0;
  background: #eeeef0;
}
.menu li {
  display: flex;
  align-items: center;
  justify-content: space-between;
  height: 37px;
  padding-right: 16px;
  border-bottom: 1px solid #e2e2e4;
}
.menu a {
  margin-left: -4px;
}
.menu svg {
  width: 12px;
  height: 12px;
  color: #b4b4b8;
}
.submenu {
  padding: 6px 0 3px;
  color: #666;
}
.submenu li {
  display: flex;
  align-items: center;
  height: 32px;
}
.submenu a {
  margin-left: -13px;
}
.collapse {
  position: absolute;
  left: 110px;
  top: 377px;
}
.collapse svg {
  width: 18px;
  height: 62px;
}
main {
  flex: 1;
  min-width: 0;
}

/* page tabs */
.pagetabs {
  display: flex;
  height: 34px;
  padding: 8px 0 0 7px;
  border-bottom: 1px solid #a6a8ac;
  background: #efeff1;
  font-size: 12px;
}
.pagetabs li {
  position: relative;
  display: flex;
  align-items: center;
  flex: none;
  height: 26px;
  padding: 0 38px 0 22px;
}
/* left and right halves lean apart to form the trapezoid */
.pagetabs li::before,
.pagetabs li::after {
  content: "";
  position: absolute;
  top: 0;
  bottom: 0;
  width: 55%;
  border: 1px solid #a6a8ac;
  background: linear-gradient(#dededf, #cdcdcf);
}
.pagetabs li::before {
  z-index: 1;
  left: -2px;
  border-right: 0;
  border-radius: 4px 0 0 0;
  transform: skewX(-17deg);
}
.pagetabs li::after {
  z-index: 2;
  right: -2px;
  border-left: 0;
  border-radius: 0 4px 0 0;
  transform: skewX(17deg);
}
.pagetabs li a,
.pagetabs li button {
  position: relative;
  z-index: 3;
}
.pagetabs li button {
  position: absolute;
  right: 16px;
  color: #aaa;
}
.pagetabs button svg {
  width: 8px;
  height: 8px;
}
.pagetabs .active::before,
.pagetabs .active::after {
  z-index: 4;
  border-bottom-color: #f4f4f6;
  background: linear-gradient(#ebebed, #f4f4f6);
}
.pagetabs .active a,
.pagetabs .active button {
  z-index: 5;
}
.pagetabs .active button {
  color: #888;
}
.crumbs {
  display: flex;
  align-items: center;
  height: 40px;
  padding-left: 20px;
  border-bottom: 1px solid #e6e6e8;
  background: #f4f4f6;
}
.crumbs svg {
  width: 13px;
  height: 13px;
  margin-right: 4px;
}
.crumbs i {
  width: 24px;
  text-align: center;
}

/* form */
.drug-form {
  display: grid;
  grid-template-columns: 274px minmax(0, 1fr);
  gap: 15px 30px;
  padding: 35px 72px 0 0;
}
.drug-form label,
.lbl {
  padding-top: 5px;
  color: #555;
  text-align: right;
}
.drug-form input {
  width: 100%;
  height: 31px;
  padding: 0 4px;
  border: 1px solid #dcdcdc;
  background: #fff;
  color: #333;
  font: inherit;
}
.drug-form input::placeholder {
  color: #c4c4c4;
}
.drug-form input.focus {
  border-color: #4aaedb;
}
.select-box {
  position: relative;
  height: 33px;
  border: 1px solid #dcdcdc;
}
.select-box select {
  width: 100%;
  height: 31px;
  padding: 0 10px;
  appearance: none;
  border: 0;
  background: #fff;
  color: #333;
  font: inherit;
}
.select-box svg {
  position: absolute;
  right: 5px;
  top: 5px;
  width: 18px;
  height: 20px;
  pointer-events: none;
}
.price {
  position: relative;
  height: 31px;
}
.caret {
  position: absolute;
  left: 25px;
  top: 6px;
  width: 1px;
  height: 19px;
  background: #222;
}
.suggest {
  position: absolute;
  z-index: 2;
  top: 31px;
  left: 0;
  right: 0;
  height: 22px;
  padding-left: 5px;
  border: 1px solid #8e8e92;
  background: #fff;
  box-shadow: 2px 2px 1px #999;
  color: #111;
  font-size: 12px;
  line-height: 22px;
}
.ibeam {
  position: absolute;
  z-index: 3;
  left: 128px;
  top: 13px;
  width: 8px;
  height: 20px;
}

/* rich text editor */
.editor {
  border: 1px solid #b6b6b6;
  color: #484848;
}
.tools {
  display: flex;
  flex-direction: column;
  gap: 5px;
  padding: 7px 8px;
  border-bottom: 1px solid #b6b6b6;
  background: linear-gradient(#f4f4f5, #cfd1cf);
}
.row {
  display: flex;
  gap: 7px;
}
.group,
.combo {
  display: flex;
  height: 28px;
  border: 1px solid #a6a6a6;
  border-radius: 3px;
  background: linear-gradient(#fff, #e6e6e6);
}
.group button {
  display: flex;
  align-items: center;
  justify-content: center;
  width: 28px;
  height: 26px;
  color: #333;
}
.group svg {
  width: 18px;
  height: 18px;
}
.group .source {
  width: 56px;
  gap: 4px;
  color: #484848;
  font-size: 12px;
}
.group .off {
  color: #aaa;
}
.group .on {
  background: #aeaeb0;
  box-shadow: inset 0 0 3px #666;
}
.sep {
  width: 1px;
  height: 18px;
  margin: 4px 2px;
  background: #c0c0c0;
}
.group b {
  font-size: 15px;
}
.group sub,
.group sup {
  font-size: 9px;
  line-height: 0;
}
.it {
  font-style: italic;
}
.un {
  text-decoration: underline;
}
.st {
  text-decoration: line-through;
}
.inv {
  padding: 0 3px;
  border-radius: 2px;
  background: #333;
  color: #fff;
  line-height: 14px;
}
.group b.inv {
  font-size: 12px;
}
.group .drop {
  width: 34px;
  gap: 3px;
}
.drop::after,
.combo::after {
  content: "";
  border: 3px solid transparent;
  border-top-color: #484848;
  border-bottom: 0;
}
.group .spell,
.group .div {
  position: relative;
  align-items: flex-start;
  padding-top: 4px;
  font-size: 9px;
  line-height: 10px;
}
.group .spell {
  gap: 1px;
}
.spell::after {
  margin-top: 8px;
}
.spell svg,
.div svg {
  position: absolute;
  left: 6px;
  bottom: 3px;
  width: 16px;
  height: 9px;
}
.group .lang {
  font-size: 16px;
}
.combo {
  align-items: center;
  justify-content: space-between;
  width: 90px;
  padding: 0 6px 0 10px;
  color: #555;
  font-size: 12px;
}
.short {
  width: 60px;
}
.content {
  height: 201px;
  padding: 21px 20px;
  background: #fff;
  color: #333;
  font-size: 13px;
}
.content mark {
  background: #1272c4;
  color: #fff;
}
.path {
  display: flex;
  align-items: center;
  gap: 11px;
  height: 30px;
  padding: 0 4px 0 12px;
  border-top: 1px solid #b6b6b6;
  background: linear-gradient(#ececec, #cfd1cf);
  font: bold 11px "Liberation Sans", sans-serif;
}
.resize {
  margin: 8px 0 0 auto;
  border: 5px solid transparent;
  border-right-color: #444;
  border-bottom-color: #444;
}
.actions {
  grid-column: 2;
  display: flex;
  gap: 4px;
}
.btn {
  display: flex;
  align-items: center;
  justify-content: center;
  width: 96px;
  height: 31px;
  border-radius: 3px;
  background: #e6e6e6;
  color: #444;
}
.btn svg {
  width: 14px;
  height: 14px;
}
.primary {
  background: #3bb4f2;
  color: #fff;
}

/* input method bar */
.ime {
  position: absolute;
  right: 0;
  bottom: 134px;
  width: 140px;
  height: 32px;
  overflow: hidden;
  color: #1a6fc0;
}
.ime-logo {
  position: absolute;
  left: 0;
  top: 0;
  width: 32px;
  height: 32px;
}
.ime-bar {
  display: flex;
  align-items: center;
  gap: 8px;
  height: 26px;
  margin: 4px 0 0 16px;
  padding-left: 23px;
  border: 1px solid #c6ccd8;
  border-right: 0;
  background: #fff;
}
.ime-bar svg {
  width: 16px;
  height: 16px;
}
.ime-bar b {
  width: 16px;
}

/* taskbar */
.taskbar {
  display: flex;
  justify-content: space-between;
  height: 82px;
  border-top: 1px solid #555;
  background: #1e1e1e;
}
.apps {
  display: flex;
  align-items: flex-start;
  gap: 1px;
  padding-left: 16px;
}
.apps button {
  display: flex;
  justify-content: center;
  position: relative;
  width: 48px;
  height: 40px;
  padding-top: 7px;
}
.apps svg {
  width: 24px;
  height: 24px;
}
.run::after {
  content: "";
  position: absolute;
  left: 4px;
  right: 4px;
  bottom: 0;
  height: 2px;
  background: #8fbadc;
}
.current {
  background: #4a4a4a;
}
.current::after {
  left: 0;
  right: 0;
}
.tray {
  display: flex;
  margin-right: -10px;
  color: #eee;
}
.lang-col {
  width: 16px;
  padding-top: 6px;
  font: 12px/20px "Liberation Mono", monospace;
}
.lang-col svg {
  width: 16px;
  height: 16px;
  margin-top: 4px;
}
.chev {
  width: 14px;
  height: 14px;
  margin: 32px 8px 0 14px;
}
.tray-grid {
  display: grid;
  grid-template-columns: repeat(3, 18px);
  gap: 22px 6px;
  align-content: start;
  padding-top: 12px;
}
.tray-grid svg {
  width: 18px;
  height: 18px;
}
```
